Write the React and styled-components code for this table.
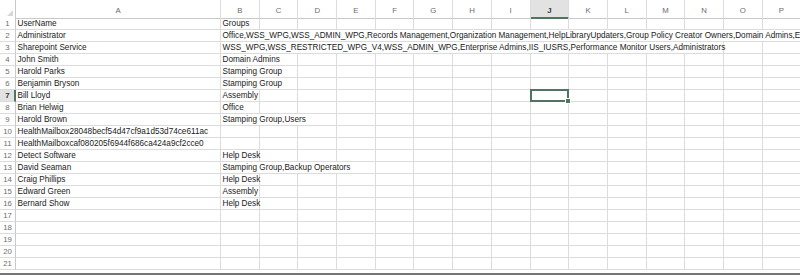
import React from 'react';
import styled, { createGlobalStyle } from 'styled-components';

const GlobalStyle = createGlobalStyle`
  html, body {
    margin: 0;
    padding: 0;
    background: #ffffff;
    overflow: hidden;
  }
  body {
    font-family: "Liberation Sans", Arial, sans-serif;
  }
`;

const GRID = '16px 205px repeat(15, 38.7px)';
const LINE = '#dcdcdc';
const HEAD_LINE = '#c9c9c9';
const SELECT = '#4f7460';

const Page = styled.div`
  width: 800px;
  height: 275px;
  display: flex;
  flex-direction: column;
  overflow: hidden;
`;

const Sheet = styled.div`
  display: flex;
  flex-direction: column;
  width: 802px;
`;

const HeaderRow = styled.div`
  display: grid;
  grid-template-columns: ${GRID};
  height: 18px;
`;

const Corner = styled.div`
  box-sizing: border-box;
  border-right: 1px solid ${HEAD_LINE};
  border-bottom: 1px solid ${HEAD_LINE};
  display: flex;
  align-items: flex-end;
  justify-content: flex-end;
  padding: 0 2px 2px 0;
`;

const ColHead = styled.div`
  box-sizing: border-box;
  border-right: 1px solid ${LINE};
  border-bottom: ${(p) => (p.$active ? `2px solid ${SELECT}` : `1px solid ${HEAD_LINE}`)};
  background: ${(p) => (p.$active ? '#e2e2e2' : '#ffffff')};
  color: ${(p) => (p.$active ? '#2e3b33' : '#6b6b6b')};
  font-weight: ${(p) => (p.$active ? 700 : 400)};
  font-size: 7.8px;
  line-height: 12px;
  padding-top: 5px;
  text-align: center;
`;

const Row = styled.div`
  display: grid;
  grid-template-columns: ${GRID};
  height: 12px;
`;

const RowNum = styled.div`
  box-sizing: border-box;
  border-right: ${(p) => (p.$active ? `2px solid ${SELECT}` : `1px solid ${HEAD_LINE}`)};
  border-bottom: 1px solid ${LINE};
  background: ${(p) => (p.$active ? '#e2e2e2' : '#ffffff')};
  color: ${(p) => (p.$active ? '#2e3b33' : '#6e6e6e')};
  font-weight: ${(p) => (p.$active ? 700 : 400)};
  font-size: 7.8px;
  line-height: 11px;
  text-align: center;
  padding-left: ${(p) => (p.$active ? '1px' : '0')};
`;

const Cell = styled.div`
  position: relative;
  box-sizing: border-box;
  grid-column: span ${(p) => p.$span || 1};
  border-right: 1px solid ${LINE};
  border-bottom: 1px solid ${LINE};
  color: #1a1a1a;
  font-size: 8.2px;
  line-height: 11px;
  padding-left: 1.5px;
  white-space: nowrap;
  overflow: visible;
`;

const Selection = styled.div`
  position: absolute;
  top: -1px;
  left: -1px;
  right: -1px;
  bottom: -1px;
  border: 2px solid ${SELECT};
  box-sizing: border-box;
`;

const SelectedCell = styled(Cell)`
  z-index: 2;
`;

const Handle = styled.div`
  position: absolute;
  right: -3px;
  bottom: -3px;
  width: 4px;
  height: 4px;
  background: ${SELECT};
  border: 1px solid #ffffff;
`;

const TabBar = styled.div`
  margin-top: 3px;
  height: 10px;
  background: #747474;
`;

const COLS = 'ABCDEFGHIJKLMNOP'.split('');

const DATA = [
  ['UserName', 'Groups', 1],
  [
    'Administrator',
    'Office,WSS_WPG,WSS_ADMIN_WPG,Records Management,Organization Management,HelpLibraryUpdaters,Group Policy Creator Owners,Domain Admins,Enterprise Admins',
    15,
  ],
  [
    'Sharepoint Service',
    'WSS_WPG,WSS_RESTRICTED_WPG_V4,WSS_ADMIN_WPG,Enterprise Admins,IIS_IUSRS,Performance Monitor Users,Administrators',
    13,
  ],
  ['John Smith', 'Domain Admins', 2],
  ['Harold Parks', 'Stamping Group', 2],
  ['Benjamin Bryson', 'Stamping Group', 2],
  ['Bill Lloyd', 'Assembly', 1],
  ['Brian Helwig', 'Office', 1],
  ['Harold Brown', 'Stamping Group,Users', 3],
  ['HealthMailbox28048becf54d47cf9a1d53d74ce611ac', '', 1],
  ['HealthMailboxcaf080205f6944f686ca424a9cf2cce0', '', 1],
  ['Detect Software', 'Help Desk', 1],
  ['David Seaman', 'Stamping Group,Backup Operators', 4],
  ['Craig Phillips', 'Help Desk', 1],
  ['Edward Green', 'Assembly', 1],
  ['Bernard Show', 'Help Desk', 1],
  ['', '', 1],
  ['', '', 1],
  ['', '', 1],
  ['', '', 1],
  ['', '', 1],
];

const ACTIVE_ROW = 7;
const ACTIVE_COL = 'J';

const CornerMark = () => (
  <svg width="6" height="6" viewBox="0 0 6 6">
    <path d="M6 0 L6 6 L0 6 Z" fill="#d6d6d6" />
  </svg>
);

const SheetRow = ({ num, name, groups, span }) => {
  const rest = COLS.slice(1 + span);
  return (
    <Row>
      <RowNum $active={num === ACTIVE_ROW}>{num}</RowNum>
      <Cell>{name}</Cell>
      <Cell $span={span}>{groups}</Cell>
      {rest.map((c) =>
        num === ACTIVE_ROW && c === ACTIVE_COL ? (
          <SelectedCell key={c}>
            <Selection />
            <Handle />
          </SelectedCell>
        ) : (
          <Cell key={c} />
        )
      )}
    </Row>
  );
};

export default function App() {
  return (
    <Page>
      <GlobalStyle />
      <Sheet>
        <HeaderRow>
          <Corner>
            <CornerMark />
          </Corner>
          {COLS.map((c) => (
            <ColHead key={c} $active={c === ACTIVE_COL}>
              {c}
            </ColHead>
          ))}
        </HeaderRow>
        {DATA.map(([name, groups, span], i) => (
          <SheetRow key={i} num={i + 1} name={name} groups={groups} span={span} />
        ))}
      </Sheet>
      <TabBar />
    </Page>
  );
}
